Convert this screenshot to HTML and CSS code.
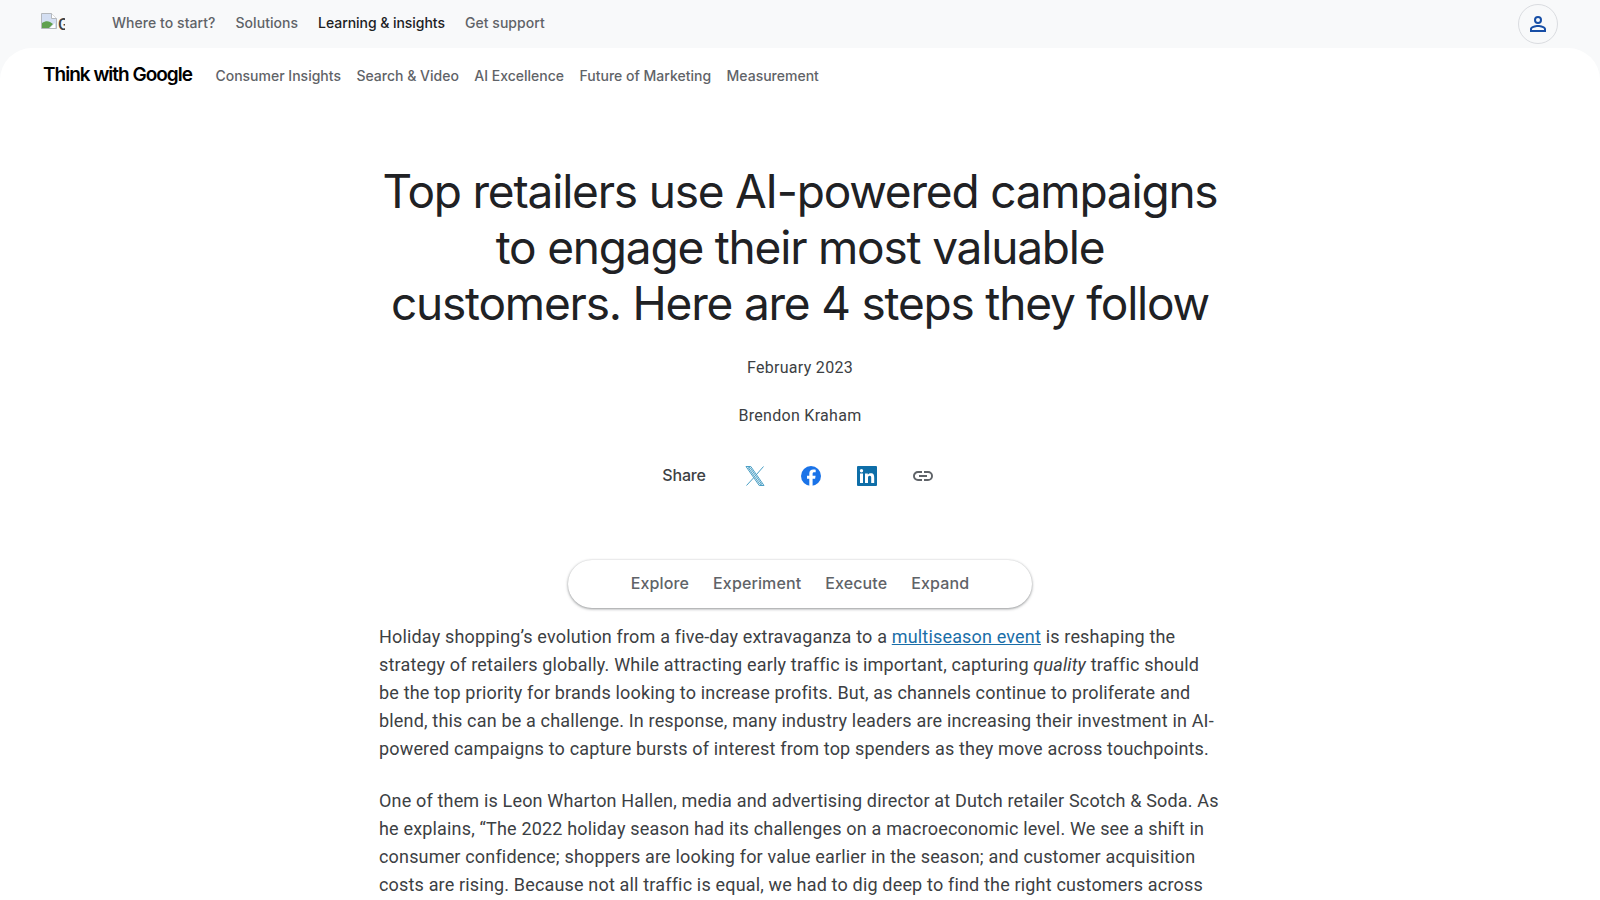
FILE: index.html
```html
<!DOCTYPE html>
<html lang="en">
<head>
<meta charset="utf-8">
<title>Top retailers use AI-powered campaigns</title>
<link rel="stylesheet" href="styles.css">
</head>
<body>
<header class="topbar">
  <a class="logo" href="#">
    <svg class="broken" viewBox="0 0 16 16" width="16" height="16" aria-hidden="true">
      <path d="M.5.5h10l5 5v10H.5z" fill="#d4dff2" stroke="#b4b8bc"/>
      <path d="M10.500.5v5h5" fill="#fff" stroke="#b4b8bc"/>
      <path d="M1 15V10c3-2 6-2 8-1l3 2-4 4z" fill="#5fa04e"/>
      <path d="M9 15l5-5v5z" fill="#fff"/>
    </svg><span class="logo-alt">G</span>
  </a>
  <nav class="topnav">
    <a href="#">Where to start?</a>
    <a href="#">Solutions</a>
    <a href="#" class="current">Learning &amp; insights</a>
    <a href="#">Get support</a>
  </nav>
  <button class="account" aria-label="Account">
    <svg viewBox="0 0 24 24" width="24" height="24" aria-hidden="true"><path fill="#174ea6" d="M12 4a4 4 0 1 1 0 8 4 4 0 0 1 0-8zm0 2a2 2 0 1 0 0 4 2 2 0 0 0 0-4zm0 7c2.7 0 8 1.3 8 4v3H4v-3c0-2.7 5.300-4 8-4zm0 2c-2.900 0-5.800 1.200-6 2v1h12v-1c-.2-.8-3.100-2-6-2z"/></svg>
  </button>
</header>
<div class="sheet">
  <div class="subbar">
    <a class="brand" href="#">Think with Google</a>
    <nav class="subnav">
      <a href="#">Consumer Insights</a>
      <a href="#">Search &amp; Video</a>
      <a href="#">AI Excellence</a>
      <a href="#">Future of Marketing</a>
      <a href="#">Measurement</a>
    </nav>
  </div>
  <main class="article">
    <h1 class="title">Top retailers use AI-powered campaigns<br>to engage their most valuable<br>customers. Here are 4 steps they follow</h1>
    <p class="meta date">February 2023</p>
    <p class="meta author">Brendon Kraham</p>
    <div class="share">
      <span class="share-label">Share</span>
      <a href="#" class="share-icon" aria-label="X">
        <svg viewBox="0 0 24 24" width="24" height="24" aria-hidden="true"><path fill="none" stroke="#4a9fc5" stroke-width="1" d="M3 2.500h4.800l13.200 19h-4.800zM5.300 3.700h1.800l11.600 16.600h-1.800zM20.500 2.500l-7.500 8.600M10.900 13.500L3.500 21.500"/></svg>
      </a>
      <a href="#" class="share-icon" aria-label="Facebook">
        <svg viewBox="0 0 24 24" width="24" height="24" aria-hidden="true"><circle cx="12" cy="12" r="10" fill="#1a73e8"/><path fill="#fff" d="M13.600 22v-7.300h2.500l.5-3h-3V9.900c0-.9.400-1.600 1.700-1.600h1.400V5.700s-1.200-.2-2.400-.2c-2.500 0-4 1.500-4 4.100v2.100H8v3h2.300V22z"/></svg>
      </a>
      <a href="#" class="share-icon" aria-label="LinkedIn">
        <svg viewBox="0 0 24 24" width="24" height="24" aria-hidden="true"><rect x="2" y="2" width="20" height="20" rx="1" fill="#0e6ea8"/><path fill="#fff" d="M5 9.500h3V19H5zM6.500 5a1.700 1.700 0 1 1 0 3.400 1.700 1.700 0 0 1 0-3.400zM10 9.500h2.800v1.300c.5-.8 1.500-1.500 3-1.500 3 0 3.400 2 3.400 4.500V19h-3v-4.900c0-1.200 0-2.400-1.500-2.400s-1.700 1.100-1.700 2.300v5H10z"/></svg>
      </a>
      <a href="#" class="share-icon" aria-label="Copy link">
        <svg viewBox="0 0 24 24" width="24" height="24" aria-hidden="true"><path fill="#5f6368" d="M3.900 12c0-1.700 1.400-3.100 3.100-3.100h4V7H7a5 5 0 0 0 0 10h4v-1.900H7c-1.700 0-3.100-1.400-3.100-3.100zM8 13h8v-2H8zm9-6h-4v1.900h4a3.100 3.100 0 0 1 0 6.200h-4V17h4a5 5 0 0 0 0-10z"/></svg>
      </a>
    </div>
    <nav class="pill">
      <a href="#">Explore</a>
      <a href="#">Experiment</a>
      <a href="#">Execute</a>
      <a href="#">Expand</a>
    </nav>
    <div class="body">
      <p>Holiday shopping’s evolution from a five-day extravaganza to a <a href="#">multiseason event</a> is reshaping the strategy of retailers globally. While attracting early traffic is important, capturing <em>quality</em> traffic should be the top priority for brands looking to increase profits. But, as channels continue to proliferate and blend, this can be a challenge. In response, many industry leaders are increasing their investment in AI-powered campaigns to capture bursts of interest from top spenders as they move across touchpoints.</p>
      <p>One of them is Leon Wharton Hallen, media and advertising director at Dutch retailer Scotch &amp; Soda. As he explains, “The 2022 holiday season had its challenges on a macroeconomic level. We see a shift in consumer confidence; shoppers are looking for value earlier in the season; and customer acquisition costs are rising. Because not all traffic is equal, we had to dig deep to find the right customers across</p>
    </div>
  </main>
</div>
</body>
</html>
```
FILE: styles.css
```css
* { box-sizing: border-box; }
html, body { margin: 0; height: 900px; overflow: hidden; }
body { background: #f8f9fa; font-family: "Roboto", sans-serif; color: #3c4043; }
a { color: inherit; text-decoration: none; }

.topbar { height: 48px; display: flex; align-items: center; padding: 0 42px 0 41px; }
.logo { display: flex; width: 24px; height: 24px; overflow: hidden; padding-top: 1px; font-family: "Roboto", sans-serif; font-size: 16px; font-weight: 500; color: #3c4043; }
.broken { flex: none; }
.logo-alt { line-height: 24px; margin-left: 1px; }
.topnav { display: flex; gap: 20px; margin-left: 47px; padding-bottom: 3px; font-family: "Inter", sans-serif; font-size: 14px; font-weight: 500; letter-spacing: .05px; color: #5f6368; }
.topnav .current { color: #202124; letter-spacing: -.05px; }
.account { margin-left: auto; width: 40px; height: 40px; border-radius: 50%; border: 1px solid #dadce0; background: #f8f9fa; padding: 0; display: flex; align-items: center; justify-content: center; }

.sheet { background: #fff; border-radius: 32px 32px 0 0; height: 852px; overflow: hidden; }
.subbar { height: 54px; display: flex; align-items: center; padding-left: 43px; }
.brand { padding-bottom: 2px; font-family: "Inter", sans-serif; font-size: 19px; font-weight: 600; letter-spacing: -1px; color: #000; }
.subnav { display: flex; gap: 15.5px; margin-left: 23.5px; font-family: "Inter", sans-serif; font-size: 14px; font-weight: 500; color: #5f6368; }

.article { display: flex; flex-direction: column; align-items: center; padding-top: 61px; }
.title { margin: 0; font-family: "Inter", sans-serif; font-size: 46px; line-height: 56px; font-weight: 400; letter-spacing: -1.2px; text-align: center; color: #202124; }
.meta { margin: 0; font-size: 16px; line-height: 24px; letter-spacing: .3px; color: #3c4043; }
.date { margin-top: 25px; }
.author { margin-top: 24px; }
.share { display: flex; align-items: center; gap: 32px; margin-top: 24px; height: 48px; padding-right: 3px; }
.share-label { padding-bottom: 2px; font-family: "Inter", sans-serif; font-size: 16px; font-weight: 500; letter-spacing: -.2px; color: #3c4043; margin-right: 5px; }
.share-icon { display: flex; }
.pill { margin-top: 60px; width: 464px; height: 48px; padding-bottom: 2px; border-radius: 24px; background: #fff; box-shadow: 0 1px 3px rgba(60,64,67,.55), 0 0 2px rgba(60,64,67,.1); display: flex; align-items: center; justify-content: center; gap: 24px; font-family: "Inter", sans-serif; font-size: 16px; font-weight: 500; letter-spacing: .12px; color: #5f6368; }
.body { width: 842px; margin-top: 15px; font-size: 18px; line-height: 28px; letter-spacing: .17px; color: #3c4043; }
.body p { margin: 0 0 24px; }
.body a { color: #1a6ea8; text-decoration: underline; }
```
